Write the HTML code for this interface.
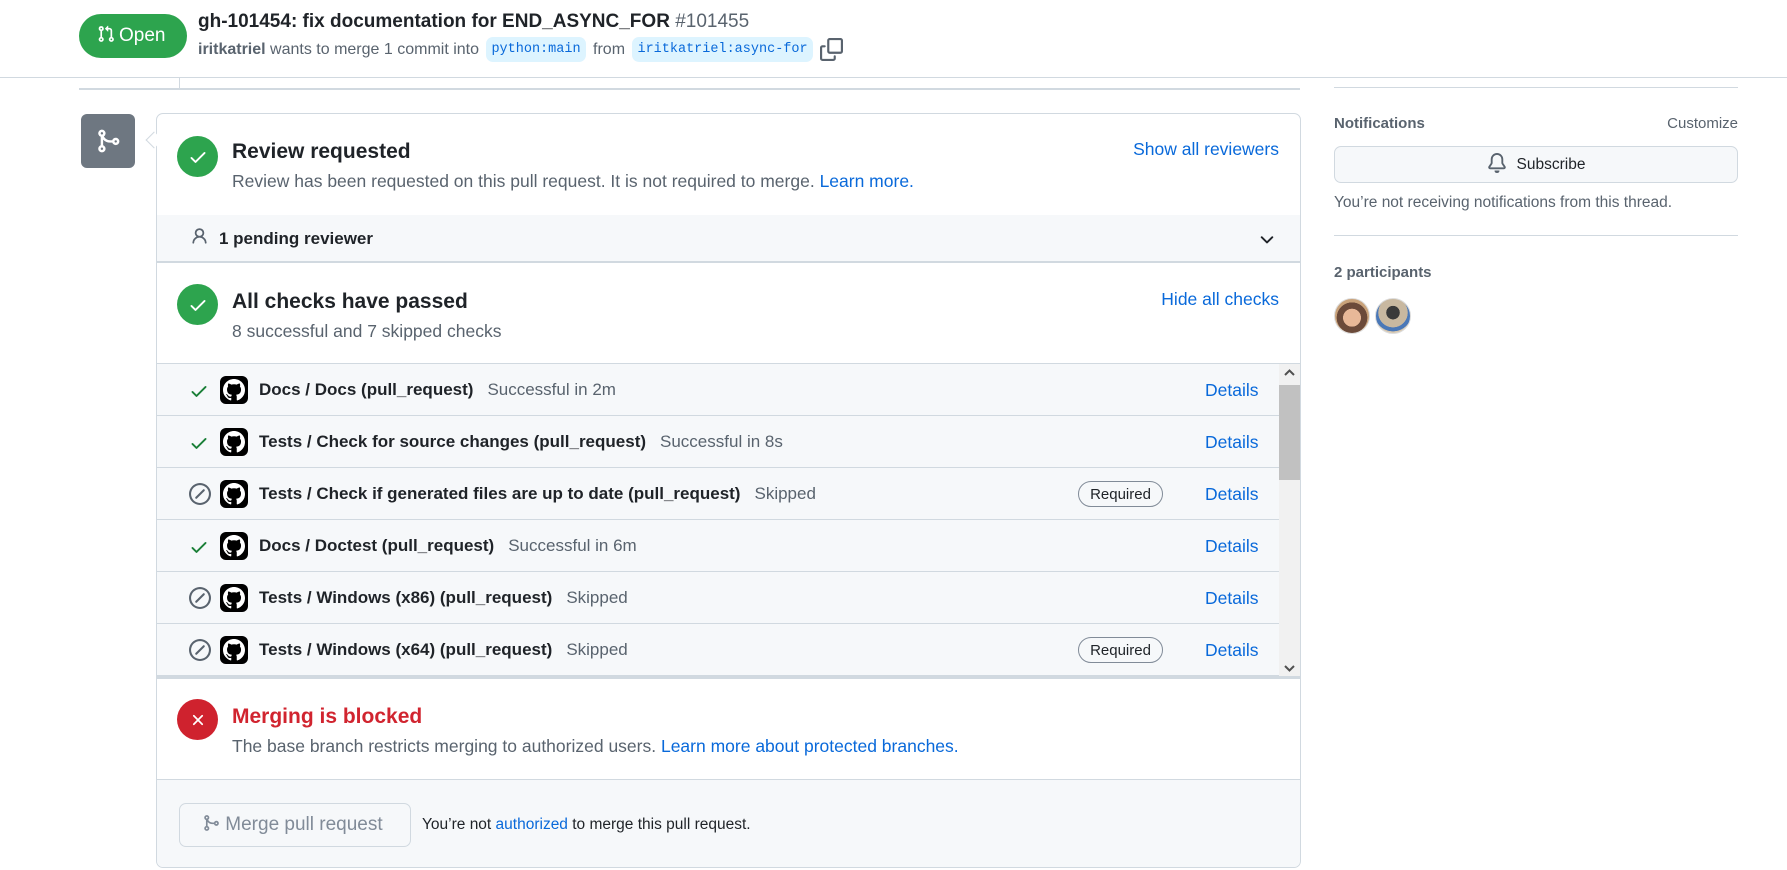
<!DOCTYPE html>
<html><head><meta charset="utf-8"><style>
*{box-sizing:border-box;margin:0;padding:0}
body{width:1787px;height:870px;overflow:hidden;background:#fff;font-family:"Liberation Sans",sans-serif;color:#1f2328;position:relative}
.a{position:absolute;white-space:nowrap}
.blue{color:#0969da}
.muted{color:#59636e}
.pill{background:#ddf4ff;color:#0969da;font-family:"Liberation Mono",monospace;font-size:13.5px;border-radius:7px;height:25px;line-height:25px;padding:0 5px;display:inline-block;margin:0 3px}
.circ{position:absolute;width:41px;height:41px;border-radius:50%;display:flex;align-items:center;justify-content:center}
.row{position:absolute;left:157px;width:1122px;height:52px;border-bottom:1px solid #d1d9e0;background:#f6f8fa}
.row .ic{position:absolute;left:32px;top:17px}
.row .gh{position:absolute;left:63px;top:12px;width:28px;height:28px;background:#000;border-radius:6px;display:flex;align-items:center;justify-content:center}
.row .t{position:absolute;left:102px;top:0;line-height:52px;font-size:17px;font-weight:bold;white-space:nowrap}
.row .t span{font-weight:normal;color:#59636e;margin-left:14px}
.row .d{position:absolute;left:1048px;line-height:52px;font-size:17.5px;color:#0969da}
.row .req{position:absolute;left:921px;top:13px;width:85px;height:26px;border:1px solid #818b98;border-radius:13px;font-size:15px;text-align:center;line-height:25px}
</style></head><body>
<svg width="0" height="0" style="position:absolute"><defs><symbol id="oct" viewBox="0 0 16 16"><path d="M8 0c4.42 0 8 3.58 8 8a8.013 8.013 0 0 1-5.45 7.590c-.4.08-.55-.17-.55-.38 0-.27.01-1.13.01-2.2 0-.75-.25-1.23-.54-1.48 1.78-.2 3.65-.88 3.65-3.95 0-.88-.31-1.59-.82-2.150.08-.2.36-1.02-.08-2.12 0 0-.67-.22-2.2.82-.64-.18-1.32-.27-2-.27-.68 0-1.36.09-2 .27-1.53-1.030-2.2-.82-2.2-.82-.44 1.1-.16 1.92-.08 2.12-.51.56-.82 1.28-.82 2.15 0 3.06 1.86 3.75 3.64 3.95-.23.2-.44.55-.51 1.07-.46.21-1.61.55-2.33-.66-.15-.24-.6-.83-1.23-.82-.67.01-.27.38.01.53.34.19.73.9.82 1.13.16.45.68 1.31 2.69.94 0 .67.01 1.3.01 1.49 0 .21-.15.45-.55.38A7.995 7.995 0 0 1 0 8c0-4.42 3.58-8 8-8Z"/></symbol>
<symbol id="chk" viewBox="0 0 16 16"><path d="M13.78 4.22a.75.75 0 0 1 0 1.06l-7.25 7.25a.75.75 0 0 1-1.06 0L2.22 9.28a.75.75 0 0 1 1.06-1.06L6 10.94l6.72-6.72a.75.75 0 0 1 1.06 0Z"/></symbol>
<symbol id="skip" viewBox="0 0 16 16"><path d="M8 0a8 8 0 1 1 0 16A8 8 0 0 1 8 0ZM1.5 8a6.5 6.5 0 1 0 13 0 6.5 6.5 0 0 0-13 0Zm9.78-2.22-5.5 5.5a.749.749 0 0 1-1.06-1.06l5.5-5.5a.749.749 0 0 1 1.06 1.06Z"/></symbol></defs></svg>
<!-- header -->
<div class="a" style="left:79px;top:14px;width:108px;height:44px;border-radius:22px;background:#2da44e;color:#fff;font-size:19px;line-height:44px;padding-left:18px">
<svg width="18" height="18" viewBox="0 0 16 16" style="vertical-align:-2px;margin-right:4px" fill="#fff"><path d="M1.5 3.25a2.25 2.25 0 1 1 3 2.122v5.256a2.251 2.251 0 1 1-1.5 0V5.372A2.25 2.25 0 0 1 1.5 3.25Zm5.677-.177L9.573.677A.25.25 0 0 1 10 .854V2.5h1A2.5 2.5 0 0 1 13.5 5v5.628a2.251 2.251 0 1 1-1.5 0V5a1 1 0 0 0-1-1h-1v1.646a.25.25 0 0 1-.427.177L7.177 3.427a.25.25 0 0 1 0-.354ZM3.750 2.5a.75.75 0 1 0 0 1.5.75.75 0 0 0 0-1.5Zm0 9.5a.75.75 0 1 0 0 1.5.75.75 0 0 0 0-1.5Zm8.25.75a.75.75 0 1 0 1.5 0 .75.75 0 0 0-1.5 0Z"/></svg>Open</div>
<div class="a" style="left:198px;top:9px;font-size:19px;font-weight:bold;line-height:26px">gh-101454: fix documentation for END_ASYNC_FOR <span style="font-weight:normal;color:#59636e">#101455</span></div>
<div class="a muted" style="left:198px;top:37px;font-size:16px;line-height:25px;display:flex;align-items:center"><b style="color:#59636e">iritkatriel</b>&nbsp;wants to merge 1 commit into&nbsp;<span class="pill">python:main</span>&nbsp;from&nbsp;<span class="pill">iritkatriel:async-for</span>
<svg style="margin-left:4px" width="23" height="23" viewBox="0 0 16 16" fill="#59636e"><path d="M0 6.75C0 5.784.784 5 1.75 5h1.5a.75.75 0 0 1 0 1.5h-1.5a.25.25 0 0 0-.25.25v7.5c0 .138.112.25.25.25h7.5a.25.25 0 0 0 .25-.25v-1.5a.75.75 0 0 1 1.5 0v1.5A1.75 1.75 0 0 1 9.25 16h-7.5A1.75 1.75 0 0 1 0 14.25Z"/><path d="M5 1.75C5 .784 5.784 0 6.75 0h7.5C15.216 0 16 .784 16 1.75v7.5A1.75 1.75 0 0 1 14.25 11h-7.5A1.75 1.75 0 0 1 5 9.25Zm1.75-.25a.25.25 0 0 0-.25.25v7.5c0 .138.112.25.25.25h7.5a.25.25 0 0 0 .25-.25v-7.5a.25.25 0 0 0-.25-.25Z"/></svg></div>
<div class="a" style="left:0;top:77px;width:1787px;height:1px;background:#d1d9e0"></div>
<div class="a" style="left:179px;top:78px;width:1px;height:11px;background:#d1d9e0"></div>
<div class="a" style="left:79px;top:88px;width:1221px;height:2px;background:#d1d9e0"></div>
<!-- merge icon box -->
<div class="a" style="left:81px;top:114px;width:54px;height:54px;border-radius:6px;background:#6e7781;display:flex;align-items:center;justify-content:center">
<svg width="26" height="26" viewBox="0 0 16 16" fill="#fff"><path d="M5.45 5.154A4.25 4.25 0 0 0 9.25 7.5h1.378a2.251 2.251 0 1 1 0 1.5H9.25A5.734 5.734 0 0 1 5 7.123v3.505a2.25 2.25 0 1 1-1.5 0V5.372a2.25 2.25 0 1 1 1.95-.218ZM4.25 13.5a.75.75 0 1 0 0-1.5.75.75 0 0 0 0 1.5Zm8.5-4.5a.75.75 0 1 0 0-1.5.75.75 0 0 0 0 1.5ZM5 3.25a.75.75 0 1 0 0 .005V3.25Z"/></svg></div>
<!-- card -->
<div class="a" style="left:156px;top:113px;width:1145px;height:755px;border:1px solid #d1d9e0;border-radius:7px;overflow:hidden;background:#fff"></div>
<div class="a" style="left:148px;top:134px;width:12px;height:12px;background:#fff;border-left:1px solid #d1d9e0;border-bottom:1px solid #d1d9e0;transform:rotate(45deg)"></div>
<div class="circ" style="left:177px;top:136px;background:#2da44e"><svg width="20" height="20" fill="#fff"><use href="#chk"/></svg></div>
<div class="a" style="left:232px;top:140px;font-size:21px;font-weight:bold">Review requested</div>
<div class="a muted" style="left:232px;top:171px;font-size:17.5px">Review has been requested on this pull request. It is not required to merge. <span class="blue">Learn more.</span></div>
<div class="a blue" style="right:508px;top:139px;font-size:17.5px">Show all reviewers</div>
<div class="a" style="left:157px;top:215px;width:1143px;height:48px;background:#f6f8fa;border-bottom:2px solid #d1d9e0"></div>
<svg class="a" style="left:190px;top:227px" width="19" height="19" viewBox="0 0 16 16" fill="#59636e"><path d="M10.561 8.073a6.005 6.005 0 0 1 3.432 5.142.75.75 0 1 1-1.498.07 4.5 4.5 0 0 0-8.99 0 .75.75 0 0 1-1.498-.07 6.004 6.004 0 0 1 3.431-5.142 3.999 3.999 0 1 1 5.123 0ZM10.5 5a2.5 2.5 0 1 0-5 0 2.5 2.5 0 0 0 5 0Z"/></svg>
<div class="a" style="left:219px;top:229px;font-size:17px;font-weight:bold">1 pending reviewer</div>
<svg class="a" style="left:1257px;top:230px" width="20" height="20" viewBox="0 0 16 16" fill="#1f2328"><path d="M12.78 5.22a.749.749 0 0 1 0 1.06l-4.25 4.25a.749.749 0 0 1-1.060 0L3.22 6.28a.749.749 0 1 1 1.06-1.06L8 8.939l3.72-3.719a.749.749 0 0 1 1.06 0Z"/></svg>
<div class="circ" style="left:177px;top:284px;background:#2da44e"><svg width="20" height="20" fill="#fff"><use href="#chk"/></svg></div>
<div class="a" style="left:232px;top:290px;font-size:21px;font-weight:bold">All checks have passed</div>
<div class="a muted" style="left:232px;top:321px;font-size:17.5px">8 successful and 7 skipped checks</div>
<div class="a blue" style="right:508px;top:289px;font-size:17.5px">Hide all checks</div>
<div class="a" style="left:157px;top:363px;width:1143px;height:1px;background:#d1d9e0"></div>
<!-- rows -->
<div class="row" style="top:364px"><svg class="ic" width="20" height="20" fill="#1a7f37"><use href="#chk"/></svg><div class="gh"><svg width="22" height="22" fill="#fff"><use href="#oct"/></svg></div><div class="t">Docs / Docs (pull_request)<span>Successful in 2m</span></div><div class="d">Details</div></div>
<div class="row" style="top:416px"><svg class="ic" width="20" height="20" fill="#1a7f37"><use href="#chk"/></svg><div class="gh"><svg width="22" height="22" fill="#fff"><use href="#oct"/></svg></div><div class="t">Tests / Check for source changes (pull_request)<span>Successful in 8s</span></div><div class="d">Details</div></div>
<div class="row" style="top:468px"><svg class="ic" width="22" height="22" fill="#59636e" style="top:15px"><use href="#skip"/></svg><div class="gh"><svg width="22" height="22" fill="#fff"><use href="#oct"/></svg></div><div class="t">Tests / Check if generated files are up to date (pull_request)<span>Skipped</span></div><div class="req">Required</div><div class="d">Details</div></div>
<div class="row" style="top:520px"><svg class="ic" width="20" height="20" fill="#1a7f37"><use href="#chk"/></svg><div class="gh"><svg width="22" height="22" fill="#fff"><use href="#oct"/></svg></div><div class="t">Docs / Doctest (pull_request)<span>Successful in 6m</span></div><div class="d">Details</div></div>
<div class="row" style="top:572px"><svg class="ic" width="22" height="22" fill="#59636e" style="top:15px"><use href="#skip"/></svg><div class="gh"><svg width="22" height="22" fill="#fff"><use href="#oct"/></svg></div><div class="t">Tests / Windows (x86) (pull_request)<span>Skipped</span></div><div class="d">Details</div></div>
<div class="row" style="top:624px"><svg class="ic" width="22" height="22" fill="#59636e" style="top:15px"><use href="#skip"/></svg><div class="gh"><svg width="22" height="22" fill="#fff"><use href="#oct"/></svg></div><div class="t">Tests / Windows (x64) (pull_request)<span>Skipped</span></div><div class="req">Required</div><div class="d">Details</div></div>
<!-- scrollbar -->
<div class="a" style="left:1279px;top:364px;width:21px;height:312px;background:#f1f1f1"></div>
<div class="a" style="left:1279px;top:385px;width:21px;height:95px;background:#c1c1c1"></div>
<svg class="a" style="left:1284px;top:369px" width="11" height="8" viewBox="0 0 11 8"><path d="M1 6l4.5-4.5L10 6" stroke="#505050" stroke-width="2" fill="none"/></svg>
<svg class="a" style="left:1284px;top:664px" width="11" height="8" viewBox="0 0 11 8"><path d="M1 2l4.5 4.5L10 2" stroke="#505050" stroke-width="2" fill="none"/></svg>
<div class="a" style="left:157px;top:676px;width:1143px;height:3px;background:#d1d9e0"></div>
<!-- blocked -->
<div class="circ" style="left:177px;top:699px;background:#cf222e"><svg width="18" height="18" viewBox="0 0 16 16" fill="#fff"><path d="M3.72 3.72a.75.75 0 0 1 1.06 0L8 6.94l3.22-3.22a.749.749 0 0 1 1.06 1.06L9.06 8l3.22 3.22a.749.749 0 0 1-1.06 1.06L8 9.06l-3.22 3.22a.749.749 0 0 1-1.06-1.06L6.94 8 3.72 4.78a.75.75 0 0 1 0-1.06Z"/></svg></div>
<div class="a" style="left:232px;top:705px;font-size:21px;font-weight:bold;color:#d1242f">Merging is blocked</div>
<div class="a muted" style="left:232px;top:736px;font-size:17.5px">The base branch restricts merging to authorized users. <span class="blue">Learn more about protected branches.</span></div>
<div class="a" style="left:157px;top:779px;width:1143px;height:88px;background:#f6f8fa;border-top:1px solid #d1d9e0;border-radius:0 0 7px 7px"></div>
<div class="a" style="left:179px;top:803px;width:232px;height:44px;border:1px solid #d1d9e0;border-radius:7px;background:#f6f8fa;color:#818b98;font-size:19px;line-height:42px;padding-left:22px">
<svg width="18" height="18" viewBox="0 0 16 16" fill="#818b98" style="vertical-align:-2px"><path d="M5.45 5.154A4.25 4.25 0 0 0 9.25 7.5h1.378a2.251 2.251 0 1 1 0 1.5H9.25A5.734 5.734 0 0 1 5 7.123v3.505a2.25 2.25 0 1 1-1.5 0V5.372a2.25 2.25 0 1 1 1.95-.218ZM4.25 13.5a.75.75 0 1 0 0-1.5.75.75 0 0 0 0 1.5Zm8.5-4.5a.75.75 0 1 0 0-1.5.75.75 0 0 0 0 1.5ZM5 3.25a.75.75 0 1 0 0 .005V3.25Z"/></svg> Merge pull request</div>
<div class="a" style="left:422px;top:816px;font-size:15.5px">You’re not <span class="blue">authorized</span> to merge this pull request.</div>
<!-- sidebar -->
<div class="a" style="left:1334px;top:87px;width:404px;height:1px;background:#d1d9e0"></div>
<div class="a muted" style="left:1334px;top:115px;font-size:15px;font-weight:bold">Notifications</div>
<div class="a muted" style="right:49px;top:115px;font-size:15px">Customize</div>
<div class="a" style="left:1334px;top:146px;width:404px;height:37px;border:1px solid #d1d9e0;border-radius:7px;background:#f6f8fa;text-align:center;line-height:35px;font-size:15.5px">
<svg width="20" height="20" viewBox="0 0 16 16" fill="#59636e" style="vertical-align:-4px;margin-right:10px"><path d="M8 16a2 2 0 0 0 1.985-1.75c.017-.137-.097-.25-.235-.25h-3.5c-.138 0-.252.113-.235.25A2 2 0 0 0 8 16ZM3 5a5 5 0 0 1 10 0v2.947c0 .05.015.098.042.139l1.703 2.555A1.519 1.519 0 0 1 13.482 13H2.518a1.516 1.516 0 0 1-1.263-2.36l1.703-2.554A.255.255 0 0 0 3 7.947Zm5-3.5A3.5 3.5 0 0 0 4.5 5v2.947c0 .346-.102.683-.294.97l-1.703 2.556a.017.017 0 0 0-.003.01l.001.006c0 .002.002.004.004.006l.006.004.007.001h10.964l.007-.001.006-.004.004-.006.001-.007a.017.017 0 0 0-.003-.01l-1.703-2.554a1.745 1.745 0 0 1-.294-.97V5A3.5 3.5 0 0 0 8 1.5Z"/></svg>Subscribe</div>
<div class="a muted" style="left:1334px;top:194px;font-size:15.5px">You’re not receiving notifications from this thread.</div>
<div class="a" style="left:1334px;top:235px;width:404px;height:1px;background:#d1d9e0"></div>
<div class="a muted" style="left:1334px;top:264px;font-size:15px;font-weight:bold">2 participants</div>
<div class="a" style="left:1334px;top:298px;width:36px;height:36px;border-radius:50%;background:radial-gradient(circle at 50% 55%,#e8b898 0 35%,#6b4a3a 36% 60%,#c9a27a 61%);border:1px solid #ddd"></div>
<div class="a" style="left:1375px;top:298px;width:36px;height:36px;border-radius:50%;background:radial-gradient(circle at 50% 40%,#3a3a3a 0 25%,#c8b8a0 26% 55%,#4a78b8 56% 70%,#d8c8b0 71%);border:1px solid #ddd"></div>
</body></html>
